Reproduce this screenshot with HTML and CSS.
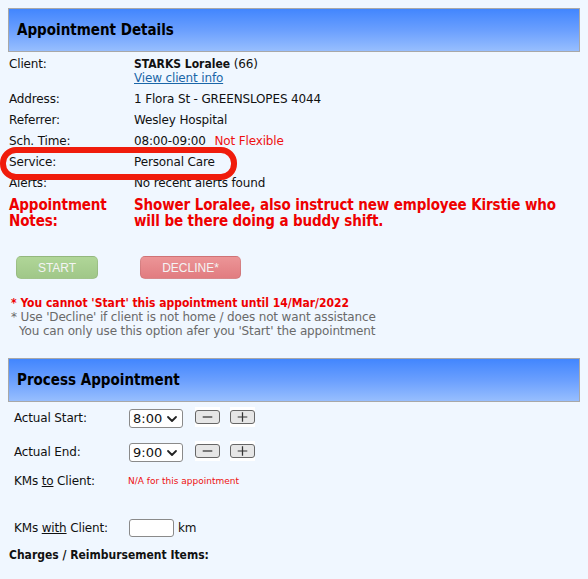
FILE: index.html
```html
<!DOCTYPE html>
<html>
<head>
<meta charset="utf-8">
<link rel="stylesheet" href="styles.css">
</head>
<body>
<div class="page">
  <div class="section-header"><h2>Appointment Details</h2></div>
  <table class="details">
    <tr><td class="lbl">Client:</td><td><b>STARKS Loralee</b> (66)<br><a href="#" class="link">View client info</a></td></tr>
    <tr><td class="lbl">Address:</td><td>1 Flora St - GREENSLOPES 4044</td></tr>
    <tr><td class="lbl">Referrer:</td><td>Wesley Hospital</td></tr>
    <tr><td class="lbl">Sch. Time:</td><td>08:00-09:00 <span class="red flex-note">Not Flexible</span></td></tr>
    <tr><td class="lbl">Service:</td><td>Personal Care</td></tr>
    <tr><td class="lbl">Alerts:</td><td>No recent alerts found</td></tr>
    <tr class="notes"><td class="lbl">Appointment Notes:</td><td>Shower Loralee, also instruct new employee Kirstie who will be there doing a buddy shift.</td></tr>
  </table>

  <div class="actions">
    <button class="btn btn-start">START</button>
    <button class="btn btn-decline">DECLINE*</button>
  </div>

  <div class="hints">
    <div class="hint-red">* You cannot 'Start' this appointment until 14/Mar/2022</div>
    <div class="hint-grey">* Use 'Decline' if client is not home / does not want assistance</div>
    <div class="hint-grey indent">You can only use this option afer you 'Start' the appointment</div>
  </div>

  <div class="section-header"><h2>Process Appointment</h2></div>

  <div class="form">
    <div class="frow row-start">
      <div class="flbl">Actual Start:</div>
      <div class="select-wrap">
        <select class="sel"><option>8:00</option></select>
        <svg class="chev" width="12" height="8" viewBox="0 0 12 8"><path d="M2 2 L6 6 L10 2" fill="none" stroke="#222" stroke-width="1.8" stroke-linecap="round" stroke-linejoin="round"/></svg>
      </div>
      <span class="pm-cell"><span class="pm"><svg width="24" height="12" viewBox="0 0 24 12"><path d="M7 6 H17" stroke="#333" stroke-width="1.3"/></svg></span></span>
      <span class="pm-cell"><span class="pm"><svg width="24" height="12" viewBox="0 0 24 12"><path d="M7 6 H17 M12 1 V11" stroke="#333" stroke-width="1.3"/></svg></span></span>
    </div>
    <div class="frow row-end">
      <div class="flbl">Actual End:</div>
      <div class="select-wrap">
        <select class="sel"><option>9:00</option></select>
        <svg class="chev" width="12" height="8" viewBox="0 0 12 8"><path d="M2 2 L6 6 L10 2" fill="none" stroke="#222" stroke-width="1.8" stroke-linecap="round" stroke-linejoin="round"/></svg>
      </div>
      <span class="pm-cell"><span class="pm"><svg width="24" height="12" viewBox="0 0 24 12"><path d="M7 6 H17" stroke="#333" stroke-width="1.3"/></svg></span></span>
      <span class="pm-cell"><span class="pm"><svg width="24" height="12" viewBox="0 0 24 12"><path d="M7 6 H17 M12 1 V11" stroke="#333" stroke-width="1.3"/></svg></span></span>
    </div>
    <div class="frow row-kmto">
      <div class="flbl">KMs <u>to</u> Client:</div>
      <div class="na">N/A for this appointment</div>
    </div>
    <div class="frow row-kmwith">
      <div class="flbl">KMs <u>with</u> Client:</div>
      <input class="km-input" type="text">
      <span class="km">km</span>
    </div>
  </div>

  <div class="charges">Charges / Reimbursement Items:</div>

  <div class="ring"></div>
</div>
</body>
</html>
```

FILE: styles.css
```css
html, body {
  margin: 0;
  padding: 0;
  background: #f0f7ff;
}
body {
  padding: 8px;
  font-family: "DejaVu Sans", Verdana, sans-serif;
  font-size: 12px;
  letter-spacing: -0.15px;
  color: #111;
}
b {
  font-family: "DejaVu Sans Condensed", "DejaVu Sans", sans-serif;
  font-stretch: condensed;
  letter-spacing: 0;
}
.page {
  position: relative;
}
.section-header {
  height: 42px;
  border: 1px solid #a8a8a8;
  background: linear-gradient(to bottom, #4286fe 0%, #6a9ffe 50%, #97befe 100%);
  display: flex;
  align-items: center;
  padding-left: 8px;
}
.section-header h2 {
  margin: 0;
  font-family: "DejaVu Sans Condensed", "DejaVu Sans", sans-serif;
  font-stretch: condensed;
  letter-spacing: 0;
  font-size: 15px;
  font-weight: bold;
  color: #000;
}
.details {
  border-collapse: collapse;
  width: 100%;
  margin-top: 2px;
}
.details td {
  padding: 3px 1px 4px 1px;
  line-height: 14px;
  vertical-align: top;
}
.details td.lbl {
  width: 123px;
}
.link {
  color: #1a66a8;
  text-decoration: underline;
}
.red {
  color: #ee1111;
}
.flex-note {
  margin-left: 5px;
}
.notes td {
  color: #ee0000;
  font-family: "DejaVu Sans Condensed", "DejaVu Sans", sans-serif;
  font-stretch: condensed;
  letter-spacing: -0.12px;
  font-weight: bold;
  font-size: 15px;
  line-height: 16px;
}
.actions {
  display: flex;
  gap: 42px;
  padding: 23px 0 0 8px;
}
.btn {
  height: 23px;
  border: 1px solid rgba(0,0,0,0.08);
  border-radius: 5px;
  color: #f4f4f4;
  font-family: "Liberation Sans", Arial, sans-serif;
  letter-spacing: 0;
  font-size: 12px;
  padding: 0;
}
.btn-start {
  width: 82px;
  background: linear-gradient(to bottom, #b0d698, #a0c788);
}
.btn-decline {
  width: 101px;
  background: linear-gradient(to bottom, #ec9597, #e17c80);
}
.hints {
  padding: 17px 0 0 3px;
  line-height: 14px;
}
.hint-red {
  color: #ee0000;
  font-family: "DejaVu Sans Condensed", "DejaVu Sans", sans-serif;
  font-stretch: condensed;
  letter-spacing: 0;
  font-weight: bold;
}
.hint-grey {
  color: #6a6a6a;
}
.indent {
  padding-left: 8px;
}
.hints + .section-header {
  margin-top: 20px;
}
.form {
  padding-left: 6px;
}
.frow {
  display: flex;
  align-items: center;
}
.flbl {
  width: 115px;
}
.row-start {
  margin-top: 3px;
  height: 26px;
}
.row-end {
  margin-top: 8px;
  height: 26px;
}
.row-kmto {
  margin-top: 6px;
  height: 20px;
}
.row-kmwith {
  margin-top: 26px;
  height: 22px;
}
.select-wrap {
  position: relative;
  width: 54px;
  height: 19px;
}
.sel {
  appearance: none;
  -webkit-appearance: none;
  width: 54px;
  height: 19px;
  border: 1px solid #8a8a8a;
  border-radius: 3px;
  background: #fff;
  font-family: "DejaVu Sans", Verdana, sans-serif;
  font-size: 13px;
  padding: 0 0 0 3px;
  color: #111;
}
.chev {
  position: absolute;
  right: 5px;
  top: 6px;
  pointer-events: none;
}
.pm-cell {
  background: #fff;
  padding: 3px 0;
  align-self: flex-start;
  margin-top: 2px;
  display: flex;
}
.row-start .pm-cell:nth-of-type(1), .row-end .pm-cell:nth-of-type(1) {
  margin-left: 12px;
}
.pm-cell + .pm-cell {
  margin-left: 10px;
}
.pm {
  width: 23px;
  height: 12px;
  border: 1px solid #666;
  border-radius: 3px;
  background: #e6e6e6;
  display: flex;
  align-items: center;
  justify-content: center;
}
.pm svg {
  display: block;
}
.na {
  color: #ee1111;
  font-size: 9px;
  letter-spacing: 0;
  margin-left: -1px;
}
.km-input {
  width: 45px;
  height: 18px;
  box-sizing: border-box;
  border: 1px solid #8a8a8a;
  border-radius: 3px;
  background: #fff;
  padding: 0;
}
.km {
  margin-left: 4px;
}
.charges {
  margin-top: 8px;
  padding-left: 1px;
  font-family: "DejaVu Sans Condensed", "DejaVu Sans", sans-serif;
  font-stretch: condensed;
  letter-spacing: 0;
  font-weight: bold;
  line-height: 16px;
}
.ring {
  position: absolute;
  left: -8px;
  top: 139px;
  width: 225px;
  height: 21px;
  border: 6px solid #f01c0c;
  border-radius: 16px;
}
```
